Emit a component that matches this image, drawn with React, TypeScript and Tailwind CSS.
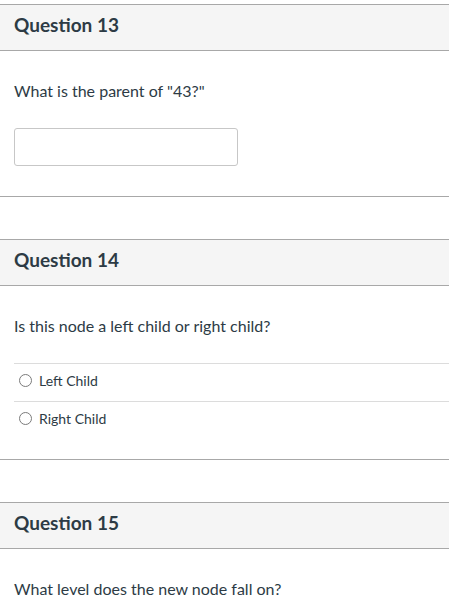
import React from 'react';

const font = { fontFamily: 'Lato, "Open Sans", sans-serif' };

function Header({ title }: { title: string }) {
  return (
    <div className="h-[46px] bg-[#f5f5f5] border-b border-[#a8a8a8] pl-[14px] pt-[8px]">
      <h2 className="text-[19px] font-bold text-[#2d3b45] leading-[24px]">{title}</h2>
    </div>
  );
}

function Radio({ label }: { label: string }) {
  return (
    <div className="border-t border-[#dcdcdc] h-[38px] flex items-start pt-[8px] pl-[5px]">
      <span className="mt-[2px] w-[13px] h-[13px] rounded-full border border-[#7b7b7b] bg-white" />
      <span className="ml-[7px] text-[14px] leading-[18px] text-[#2d3b45]">{label}</span>
    </div>
  );
}

export default function App() {
  return (
    <div className="bg-white min-h-screen pt-[4px] text-[#2d3b45]" style={font}>
      <section className="border-t border-b border-[#a8a8a8]">
        <Header title="Question 13" />
        <div className="px-[14px] pt-[30px] pb-[30px]">
          <p className="text-[16px] leading-[20px]">What is the parent of "43?"</p>
          <input
            type="text"
            className="mt-[27px] block w-[224px] h-[38px] rounded-[3px] border border-[#c7c7c7] bg-white"
          />
        </div>
      </section>

      <section className="mt-[42px] border-t border-b border-[#a8a8a8]">
        <Header title="Question 14" />
        <div className="pl-[14px] pt-[30px] pb-[20px]">
          <p className="text-[16px] leading-[20px] mb-[27px]">Is this node a left child or right child?</p>
          <Radio label="Left Child" />
          <Radio label="Right Child" />
        </div>
      </section>

      <section className="mt-[42px] border-t border-[#a8a8a8]">
        <Header title="Question 15" />
        <div className="px-[14px] pt-[30px]">
          <p className="text-[16px] leading-[20px]">What level does the new node fall on?</p>
        </div>
      </section>
    </div>
  );
}
